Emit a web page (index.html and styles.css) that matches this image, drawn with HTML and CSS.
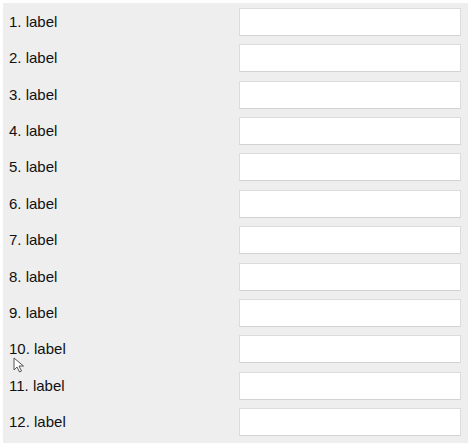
FILE: index.html
```html
<!DOCTYPE html>
<html lang="en">
<head>
  <meta charset="UTF-8">
  <title>Labels</title>
  <link rel="stylesheet" href="styles.css">
</head>
<body>
  <div class="panel">
    <label class="field-label">1. label</label><input class="field-input" type="text">
    <label class="field-label">2. label</label><input class="field-input" type="text">
    <label class="field-label">3. label</label><input class="field-input" type="text">
    <label class="field-label">4. label</label><input class="field-input" type="text">
    <label class="field-label">5. label</label><input class="field-input" type="text">
    <label class="field-label">6. label</label><input class="field-input" type="text">
    <label class="field-label">7. label</label><input class="field-input" type="text">
    <label class="field-label">8. label</label><input class="field-input" type="text">
    <label class="field-label">9. label</label><input class="field-input" type="text">
    <label class="field-label">10. label</label><input class="field-input" type="text">
    <label class="field-label">11. label</label><input class="field-input" type="text">
    <label class="field-label">12. label</label><input class="field-input" type="text">
  </div>

  <!-- mouse pointer caught in the screenshot -->
  <svg class="cursor" width="13" height="16" viewBox="0 0 13 16">
    <path d="M1 1 L1 13 L4 10 L6.5 15 L8.5 14 L6 9 L10.5 9 Z" fill="#fff" stroke="#555" stroke-width="1" stroke-linejoin="round"/>
  </svg>
</body>
</html>
```

FILE: styles.css
```css
* {
  box-sizing: border-box;
}
body {
  margin: 0;
  background-color: #fff;
  font-family: 'Liberation Sans', Arial, sans-serif;
  color: #111;
}
.panel {
  margin: 3px;
  width: 465px;
  height: 440px;
  padding: 5px 7px 7px 6px;
  background-color: #eeeeee;
  display: grid;
  grid-template-columns: 1fr 222px;
  row-gap: 8.36px;
  align-items: center;
}
.field-label {
  font-size: 15px;
  line-height: 28px;
}
.field-input {
  height: 28px;
  margin: 0;
  padding: 0 4px;
  border: 1px solid #dcdcdc;
  border-bottom-color: #d2d2d2;
  background-color: #fff;
  outline: none;
}
.cursor {
  position: absolute;
  left: 13px;
  top: 357px;
}
```
